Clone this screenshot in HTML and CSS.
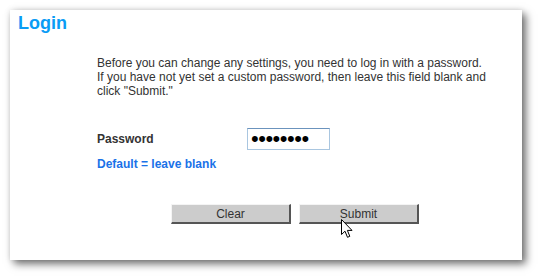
FILE: index.html
```html
<!DOCTYPE html>
<html>
<head>
<meta charset="utf-8">
<link rel="stylesheet" href="styles.css">
</head>
<body>
<div class="panel">
  <h1 class="title">Login</h1>
  <div class="content">
    <p class="intro">Before you can change any settings, you need to log in with a password.<br>If you have not yet set a custom password, then leave this field blank and click "Submit."</p>
    <div class="row">
      <label class="label" for="pw">Password</label>
      <input class="pw" id="pw" type="password" value="password">
    </div>
    <div class="hint">Default = leave blank</div>
    <div class="buttons">
      <button class="btn">Clear</button>
      <button class="btn">Submit</button>
    </div>
  </div>
  <svg class="cursor" width="13" height="20" viewBox="0 0 13 20"><path d="M0.5 0.5 L0.5 15.5 L4 12.2 L6.5 18.3 L8.8 17.3 L6.4 11.4 L11 11.4 Z" fill="#fff" stroke="#000" stroke-width="1" stroke-linejoin="miter"/></svg>
</div>
</body>
</html>
```
FILE: styles.css
```css
html, body {
  margin: 0;
  padding: 0;
  background: #ffffff;
}
body {
  width: 540px;
  height: 278px;
  overflow: hidden;
  font-family: "Liberation Sans", Arial, sans-serif;
}
.panel {
  position: relative;
  margin: 10px 0 0 10px;
  width: 512px;
  height: 250px;
  box-sizing: border-box;
  padding-top: 3px;
  background: #fff;
  box-shadow: 4px 4px 8px rgba(0,0,0,0.55), 0 0 6px rgba(0,0,0,0.12);
}
.title {
  margin: 0 0 0 8px;
  font-size: 18px;
  line-height: 20px;
  font-weight: bold;
  color: #0a9cf5;
}
.content {
  padding-left: 87px;
}
.intro {
  width: 402px;
  margin: 23px 0 0 0;
  font-size: 12px;
  line-height: 14px;
  color: #333;
}
.row {
  display: flex;
  align-items: center;
  margin-top: 30px;
}
.label {
  width: 150px;
  font-size: 12px;
  font-weight: bold;
  color: #333;
}
.pw {
  box-sizing: border-box;
  width: 83px;
  height: 22px;
  margin: 0;
  padding: 0 0 0 3px;
  border: 1px solid #a9c6e0;
  border-top-color: #6b93bd;
  font-family: "Liberation Sans", Arial, sans-serif;
  font-size: 22px;
  letter-spacing: -0.5px;
  color: #000;
  outline: none;
}
.hint {
  margin-top: 7px;
  font-size: 12px;
  line-height: 14px;
  font-weight: bold;
  color: #1a72e8;
}
.buttons {
  display: flex;
  gap: 8px;
  margin-top: 33px;
  padding-left: 74px;
}
.btn {
  box-sizing: border-box;
  width: 120px;
  height: 20px;
  margin: 0;
  padding: 0;
  background: #cccccc;
  border-style: solid;
  border-width: 1px 2px 2px 1px;
  border-color: #f4f4f4 #555 #555 #f4f4f4;
  font-family: "Liberation Sans", Arial, sans-serif;
  font-size: 12px;
  color: #333;
}
.cursor {
  position: absolute;
  left: 331px;
  top: 209px;
}
```
